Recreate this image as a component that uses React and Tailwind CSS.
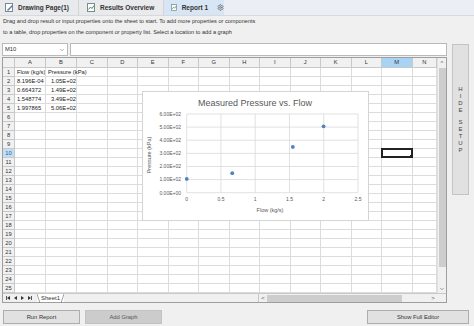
import { Settings, ChevronDown } from "lucide-react";

const cols = ["A", "B", "C", "D", "E", "F", "G", "H", "I", "J", "K", "L", "M", "N"];
const rows = Array.from({ length: 25 }, (_, i) => i + 1);

const data = {
  1: ["Flow (kg/s)", "Pressure (kPa)"],
  2: ["8.196E-04", "1.05E+02"],
  3: ["0.664372", "1.49E+02"],
  4: ["1.548774", "3.49E+02"],
  5: ["1.997865", "5.06E+02"],
};

const points = [
  [0.0008196, 105],
  [0.664372, 149],
  [1.548774, 349],
  [1.997865, 506],
];

const DocIcon = ({ pencil }) => (
  <svg width="9" height="9" viewBox="0 0 9 9">
    <rect x="0.5" y="0.5" width="7" height="8" fill="#fff" stroke="#7a8a99" />
    {pencil ? (
      <path d="M2 7 L7 2 L8 3 L3 8 Z" fill="#5a7da8" />
    ) : (
      <path d="M1.5 6.5 L3.5 4 L5 5.5 L7 2.5" fill="none" stroke="#3c9a4a" strokeWidth="1" />
    )}
  </svg>
);

const Chart = () => {
  const x0 = 44.7;
  const x1 = 216;
  const y0 = 23;
  const y1 = 101.7;
  const px = (v) => x0 + (v / 2.5) * (x1 - x0);
  const py = (v) => y1 - (v / 600) * (y1 - y0);
  const yTicks = [0, 100, 200, 300, 400, 500, 600];
  const xTicks = [0, 0.5, 1, 1.5, 2, 2.5];
  return (
    <svg width="227" height="130" style={{ fontFamily: '"Liberation Sans", Arial, sans-serif' }}>
      <rect x="0.5" y="0.5" width="226" height="129" fill="#fff" stroke="#d4d4d4" />
      <text x="113" y="15" textAnchor="middle" fontSize="9" fill="#595959">
        Measured Pressure vs. Flow
      </text>
      {yTicks.map((t) => (
        <g key={t}>
          <line x1={x0} x2={x1} y1={py(t)} y2={py(t)} stroke="#d9d9d9" strokeWidth="0.8" />
          <text x="39" y={py(t) + 1.8} textAnchor="end" fontSize="5" fill="#595959">
            {(t / 100).toFixed(2)}E+{t === 0 ? "00" : "02"}
          </text>
        </g>
      ))}
      {xTicks.map((t) => (
        <g key={t}>
          <line x1={px(t)} x2={px(t)} y1={y0} y2={y1} stroke="#d9d9d9" strokeWidth="0.8" />
          <text x={px(t)} y="110" textAnchor="middle" fontSize="5" fill="#595959">
            {t}
          </text>
        </g>
      ))}
      {points.map(([a, b], i) => (
        <circle key={i} cx={px(a)} cy={py(b)} r="1.9" fill="#4f81bd" />
      ))}
      <text x="128" y="121" textAnchor="middle" fontSize="5.5" fill="#595959">
        Flow (kg/s)
      </text>
      <text
        x="0"
        y="0"
        transform="translate(8.5 64) rotate(-90)"
        textAnchor="middle"
        fontSize="5.5"
        fill="#595959"
      >
        Pressure (kPa)
      </text>
    </svg>
  );
};

const Cell = ({ r, ci }) => {
  const v = data[r]?.[ci];
  const selected = r === 10 && ci === 12;
  let cls = "relative border-r border-b border-[#dcdcdc] bg-white leading-[8px] text-[5.8px] text-[#222] whitespace-nowrap";
  if (ci === 0) cls += " overflow-hidden pl-[2px]";
  if (ci === 1) cls += " overflow-visible z-10 pl-[2px]";
  if (ci === 1 && r > 1) cls += " pl-[5px]";
  return (
    <div className={cls}>
      {v}
      {selected && (
        <div className="absolute -left-[1px] -top-[1px] right-[-1px] bottom-[-1px] border-2 border-[#222]">
          <div className="absolute -right-[2px] -bottom-[2px] w-[3px] h-[3px] bg-[#222]" />
        </div>
      )}
    </div>
  );
};

export default function App() {
  return (
    <div
      className="w-[474px] h-[326px] bg-[#f0f0f0] overflow-hidden text-[#333]"
      style={{ fontFamily: '"Liberation Sans", Arial, sans-serif' }}
    >
      {/* tabs */}
      <div className="flex h-[16px] bg-[#eceef5] border-b border-[#d6d9e0] whitespace-nowrap">
        <div className="flex items-center gap-[4px] w-[79px] pl-[5px] bg-[#e9eaec] border-r border-[#d2d4d8]">
          <DocIcon pencil />
          <span className="text-[6.5px] font-bold text-[#333]">Drawing Page(1)</span>
        </div>
        <div className="flex items-center gap-[4px] w-[85px] pl-[8px] bg-[#e9eaec] border-r border-[#d2d4d8]">
          <DocIcon />
          <span className="text-[6.5px] font-bold text-[#333]">Results Overview</span>
        </div>
        <div className="flex items-center gap-[4px] w-[60px] pl-[7px] bg-[#d8e5f4]">
          <DocIcon />
          <span className="text-[6.5px] font-bold text-[#333]">Report 1</span>
          <Settings size={7} className="ml-[5px] shrink-0 text-[#777]" strokeWidth={3} />
        </div>
      </div>

      {/* info text */}
      <div className="pl-[3px] text-[5.6px] leading-[11px] text-[#333] whitespace-nowrap">
        <div>Drag and drop result or input properties onto the sheet to start. To add more properties or components</div>
        <div>to a table, drop properties on the component or property list. Select a location to add a graph</div>
      </div>

      <div className="flex gap-[5px] pl-[2px] mt-[5px]">
        {/* left column */}
        <div className="flex flex-col w-[445px]">
          <div className="flex gap-[2px] h-[13px]">
            <div className="flex items-center justify-between w-[66px] bg-white border border-[#b9b9b9] px-[2px] text-[5.8px]">
              <span>M10</span>
              <ChevronDown size={6} className="text-[#666]" />
            </div>
            <div className="flex-1 bg-white border border-[#b9b9b9]" />
          </div>

          {/* sheet */}
          <div className="mt-[1px] border border-[#9e9e9e] bg-white flex flex-col">
            <div className="flex h-[235px]">
              <div className="relative flex-1 overflow-hidden">
                <div className="grid grid-cols-[12px_31px_31px_repeat(11,30.5px)_1fr] grid-rows-[10px_repeat(25,9px)]">
                  <div className="bg-[#f1f1f1] border-r border-b border-[#c8c8c8]" />
                  {cols.map((c) => (
                    <div
                      key={c}
                      className={`flex items-center justify-center border-r border-b border-[#c8c8c8] text-[5.8px] ${
                        c === "M" ? "bg-[#a9d3f2]" : "bg-[#f1f1f1]"
                      }`}
                    >
                      {c}
                    </div>
                  ))}
                  {rows.map((r) => [
                    <div
                      key={`h${r}`}
                      className={`flex items-center justify-center border-r border-b border-[#c8c8c8] text-[5.8px] ${
                        r === 10 ? "bg-[#c3def4] text-[#1d5fa0]" : "bg-[#f1f1f1]"
                      }`}
                    >
                      {r}
                    </div>,
                    ...cols.map((c, ci) => <Cell key={`${r}${c}`} r={r} ci={ci} />),
                  ])}
                </div>
                <div className="absolute left-[139px] top-[33px] z-20">
                  <Chart />
                </div>
              </div>
              {/* vertical scrollbar */}
              <div className="w-[9px] flex flex-col bg-[#f0f0f0] border-l border-[#e0e0e0]">
                <div className="h-[10px] flex items-center justify-center text-[6px] text-[#555]">^</div>
                <div className="h-[199px] mx-[0.5px] bg-[#cdcdcd]" />
                <div className="flex-1" />
                <div className="h-[9px] flex items-center justify-center">
                  <ChevronDown size={6} className="text-[#555]" />
                </div>
              </div>
            </div>

            {/* bottom strip */}
            <div className="flex h-[9px] border-t border-[#c8c8c8] bg-[#f0f0f0]">
              <div className="flex items-center gap-[4px] pl-[3px] w-[34px]">
                <svg width="4" height="4" viewBox="0 0 4 4"><path d="M0 0h0.8v4H0zM4 0v4L1 2z" fill="#333" /></svg>
                <svg width="3" height="4" viewBox="0 0 3 4"><path d="M3 0v4L0 2z" fill="#333" /></svg>
                <svg width="3" height="4" viewBox="0 0 3 4"><path d="M0 0v4l3-2z" fill="#333" /></svg>
                <svg width="4" height="4" viewBox="0 0 4 4"><path d="M0 0v4l3-2zM3.2 0H4v4h-0.8z" fill="#333" /></svg>
              </div>
              <div className="flex items-stretch bg-white">
                <svg width="3" height="9" viewBox="0 0 3 9"><path d="M0 0 L3 9" stroke="#777" strokeWidth="0.7" /></svg>
                <span className="text-[6px] leading-[9px] px-[1px]">Sheet1</span>
                <svg width="3" height="9" viewBox="0 0 3 9"><path d="M3 0 L0 9" stroke="#777" strokeWidth="0.7" /></svg>
              </div>
              <div className="w-[195px] border-r border-[#c8c8c8]" />
              <div className="flex items-center flex-1">
                <span className="w-[8px] text-center text-[6px] text-[#555]">&lt;</span>
                <div className="h-[7px] w-[135px] bg-[#cdcdcd]" />
                <div className="flex-1" />
                <span className="w-[8px] text-center text-[6px] text-[#555]">&gt;</span>
              </div>
              <div className="w-[9px]" />
            </div>
          </div>
        </div>

        {/* right column */}
        <div className="flex flex-col w-[17px]">
          <div className="mt-[1px] h-[151px] bg-[#e1e1e1] border border-[#c4c4c4] flex flex-col items-center justify-center text-[6px] leading-[7px] text-[#444]">
            {"HIDE".split("").map((ch, i) => (
              <span key={`a${i}`}>{ch}</span>
            ))}
            <span className="h-[5px]" />
            {"SETUP".split("").map((ch, i) => (
              <span key={`b${i}`}>{ch}</span>
            ))}
          </div>
        </div>
      </div>

      {/* buttons */}
      <div className="flex items-center mt-[7px] h-[14px] pl-[3px] pr-[5px]">
        <button className="h-[14px] w-[77px] bg-[#e1e1e1] border border-[#adadad] text-[5.8px] text-[#333]">
          Run Report
        </button>
        <button className="h-[14px] w-[77px] ml-[5px] bg-[#cccccc] border border-[#c2c2c2] text-[5.8px] text-[#555]">
          Add Graph
        </button>
        <div className="flex-1" />
        <button className="h-[14px] w-[102px] bg-[#e1e1e1] border border-[#adadad] text-[5.8px] text-[#333]">
          Show Full Editor
        </button>
      </div>
    </div>
  );
}
